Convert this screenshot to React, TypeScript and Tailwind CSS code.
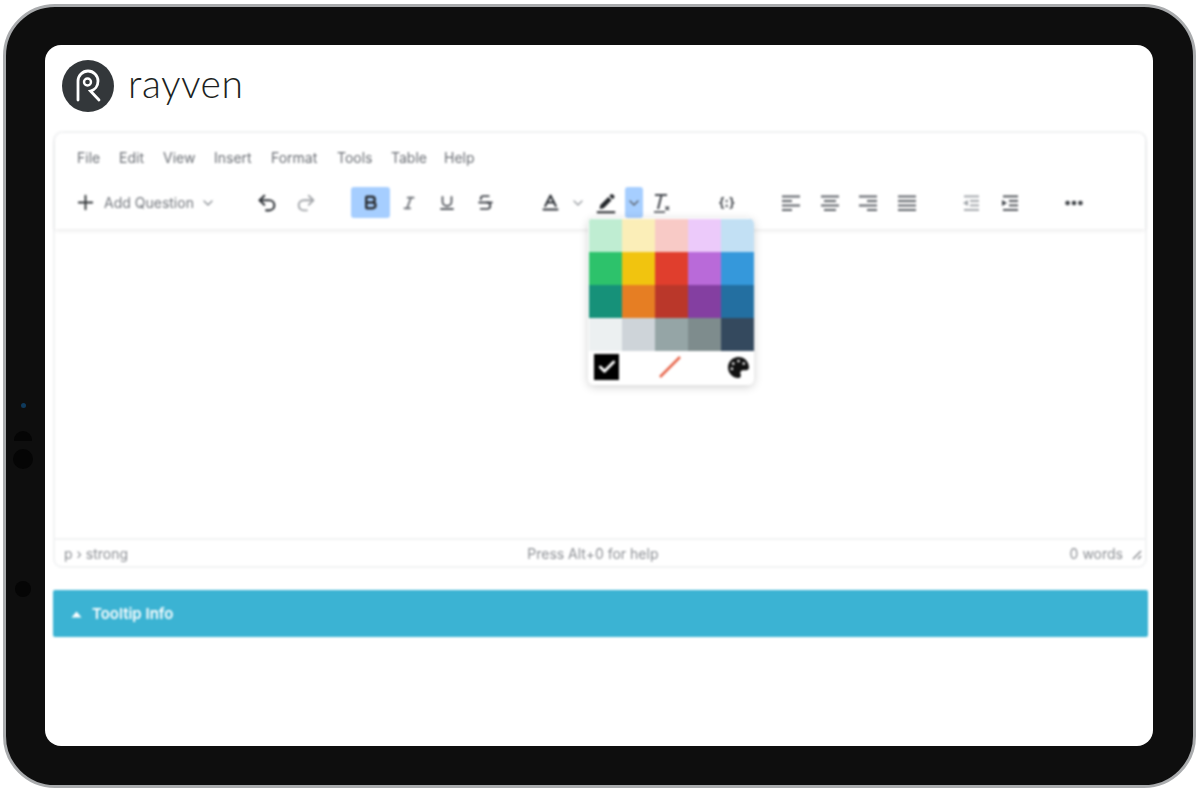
import { ReactNode } from "react";
import {
  Baseline,
  Bold,
  Check,
  ChevronDown,
  Italic,
  MoreHorizontal,
  Plus,
  Redo2,
  Strikethrough,
  Underline,
  Undo2,
} from "lucide-react";
import { FaPalette } from "react-icons/fa";

const menuItems = [
  { label: "File", cls: "w-[42px]" },
  { label: "Edit", cls: "w-[44px]" },
  { label: "View", cls: "w-[51px]" },
  { label: "Insert", cls: "w-[57px]" },
  { label: "Format", cls: "w-[66px]" },
  { label: "Tools", cls: "w-[54px]" },
  { label: "Table", cls: "w-[53px]" },
  { label: "Help", cls: "w-[40px]" },
];

const swatches = [
  "bg-[#bfedd2]", "bg-[#fbeeb8]", "bg-[#f8cac6]", "bg-[#eccafa]", "bg-[#c2e0f4]",
  "bg-[#2dc26b]", "bg-[#f1c40f]", "bg-[#e03e2d]", "bg-[#b96ad9]", "bg-[#3598db]",
  "bg-[#169179]", "bg-[#e67e23]", "bg-[#ba372a]", "bg-[#843fa1]", "bg-[#236fa1]",
  "bg-[#ecf0f1]", "bg-[#ced4d9]", "bg-[#95a5a6]", "bg-[#7e8c8d]", "bg-[#34495e]",
];

function Btn({ children, active }: { children: ReactNode; active?: boolean }) {
  return (
    <div
      className={`w-[38.5px] h-[31px] flex items-center justify-center rounded-[3px] text-[#2c3036] ${
        active ? "bg-[#a6ceff]" : ""
      }`}
    >
      {children}
    </div>
  );
}

function Lines({ rows }: { rows: [number, number][] }) {
  return (
    <svg width="18" height="16" viewBox="0 0 18 16" fill="#5f6369">
      {rows.map(([x, w], i) => (
        <rect key={i} x={x} y={0.5 + i * 4.5} width={w} height="2" />
      ))}
    </svg>
  );
}

function Indent({ dir }: { dir: "in" | "out" }) {
  const color = dir === "in" ? "#44484e" : "#9ca0a5";
  return (
    <svg width="18" height="16" viewBox="0 0 18 16" fill={color}>
      <rect x="2" y="0.500" width="15" height="1.800" />
      <rect x="8" y="5" width="9" height="1.800" />
      <rect x="8" y="9.500" width="9" height="1.800" />
      <rect x="2" y="14" width="15" height="1.800" />
      {dir === "in" ? <path d="M1 5 6 8l-5 3Z" /> : <path d="M6 5 1 8l5 3Z" />}
    </svg>
  );
}

function ClearFormat() {
  return (
    <svg width="20" height="22" viewBox="0 0 20 22" fill="none" stroke="#44484e">
      <path d="M3 3h12" strokeWidth="2" />
      <path d="M9.500 3 6 17" strokeWidth="2" />
      <path d="M2 20h11" strokeWidth="1.600" />
      <path d="m13.500 14.500 3.500 3.500m0-3.500-3.500 3.500" strokeWidth="1.500" />
    </svg>
  );
}

function Logo() {
  return (
    <div className="flex items-center gap-[14px]">
      <svg width="52" height="52" viewBox="0 0 52 52">
        <circle cx="26" cy="26" r="26" fill="#33373a" />
        <path
          d="M16 40V21a10 10 0 0 1 20 0c0 5-3 9-7.500 10l8.500 9"
          fill="none"
          stroke="#fff"
          strokeWidth="2.800"
          strokeLinecap="round"
        />
        <circle cx="25.500" cy="22" r="3.500" fill="none" stroke="#fff" strokeWidth="2.400" />
      </svg>
      <span className="font-['Lato',sans-serif] font-light text-[39px] leading-none tracking-[0.5px] text-[#1c1f22] pb-[5px]">
        rayven
      </span>
    </div>
  );
}

function ColorPopup() {
  return (
    <div className="absolute left-[-37px] top-[31px] z-10 w-[166px] h-[167px] bg-white rounded-[6px] shadow-[0_2px_10px_rgba(0,0,0,0.18)] overflow-hidden pt-px pl-px">
      <div className="grid grid-cols-[repeat(5,33px)] auto-rows-[33px]">
        {swatches.map((c) => (
          <div key={c} className={c} />
        ))}
      </div>
      <div className="flex items-center justify-between pl-[5px] pr-[5px] pt-[3px]">
        <div className="w-[25px] h-[26px] bg-black flex items-center justify-center">
          <Check size={20} color="#fff" strokeWidth={3.500} />
        </div>
        <svg width="24" height="24" viewBox="0 0 24 24" className="mr-[8px]">
          <line x1="2" y1="22" x2="22" y2="2" stroke="#e8664c" strokeWidth="2.500" />
        </svg>
        <FaPalette size={21} color="#111" />
      </div>
    </div>
  );
}

function Toolbar() {
  return (
    <div className="flex items-center h-[31px] mt-[6px] mb-[11px] ml-[11px]">
      <div className="w-[182px] flex items-center pl-[8px]">
        <Plus size={23} strokeWidth={2} color="#33373a" />
        <span className="ml-[7px] text-[14px] text-[#73777d]">Add Question</span>
        <ChevronDown size={16} className="ml-[6px] text-[#8d9197]" />
      </div>

      <div className="flex mr-[26px]">
        <Btn><Undo2 size={22} strokeWidth={2.300} color="#2f3338" /></Btn>
        <Btn><Redo2 size={22} color="#a2a5a9" /></Btn>
      </div>

      <div className="flex mr-[26px]">
        <Btn active><Bold size={17} strokeWidth={3.500} /></Btn>
        <Btn><Italic size={16} strokeWidth={2.500} color="#6a6e74" /></Btn>
        <Btn><Underline size={18} strokeWidth={2.400} color="#55595f" /></Btn>
        <Btn><Strikethrough size={19} strokeWidth={2.400} color="#44484e" /></Btn>
      </div>

      <div className="flex mr-[26px]">
        <Btn><Baseline size={21} strokeWidth={2.300} color="#2f3338" /></Btn>
        <div className="w-[17px] h-[31px] flex items-center justify-center">
          <ChevronDown size={16} color="#9a9da2" />
        </div>
        <Btn>
          <svg width="22" height="22" viewBox="0 0 24 24" fill="#24272b">
            <path d="M2 21h20v2.200H2z" />
            <path d="M5 18.500l.8-4.300 8.700-8.700 3.600 3.600-8.700 8.700Z" />
            <path d="M15.600 4.400l1.700-1.700a1.500 1.500 0 0 1 2.100 0l1.500 1.500a1.500 1.500 0 0 1 0 2.100l-1.700 1.700Z" />
          </svg>
        </Btn>
        <div className="relative w-[18px] h-[31px] bg-[#a6ceff] rounded-[3px] flex items-center justify-center">
          <ChevronDown size={16} color="#5a6068" />
          <ColorPopup />
        </div>
        <Btn><ClearFormat /></Btn>
      </div>

      <div className="flex mr-[26px]">
        <Btn>
          <span className="font-['Inter',sans-serif] font-bold text-[13px] text-[#44484e]">{"{:}"}</span>
        </Btn>
      </div>

      <div className="flex mr-[26px]">
        <Btn><Lines rows={[[0, 18], [0, 10], [0, 18], [0, 10]]} /></Btn>
        <Btn><Lines rows={[[0, 18], [3, 12], [0, 18], [3, 12]]} /></Btn>
        <Btn><Lines rows={[[0, 18], [8, 10], [0, 18], [8, 10]]} /></Btn>
        <Btn><Lines rows={[[0, 18], [0, 18], [0, 18], [0, 18]]} /></Btn>
      </div>

      <div className="flex mr-[26px]">
        <Btn><Indent dir="out" /></Btn>
        <Btn><Indent dir="in" /></Btn>
      </div>

      <Btn><MoreHorizontal size={22} strokeWidth={3} color="#2f3338" /></Btn>
    </div>
  );
}

function Editor() {
  return (
    <div className="h-[437px] ml-2 mr-[6px] border-2 border-[#f2f3f4] rounded-[9px] flex flex-col blur-[0.8px]">
      <div className="shadow-[0_2px_4px_rgba(0,0,0,0.08)] rounded-t-[9px]">
        <div className="h-[48px] flex items-center pl-[22px] text-[14px] text-[#6a6e74]">
          {menuItems.map((m) => (
            <span key={m.label} className={m.cls}>
              {m.label}
            </span>
          ))}
        </div>
        <Toolbar />
      </div>
      <div className="flex-1" />
      <div className="h-[28px] border-t-2 border-[#f2f3f4] flex items-center justify-between pl-[9px] pr-[3px] text-[14px] text-[#8c8f94]">
        <span>p › strong</span>
        <span className="mr-[12px]">Press Alt+0 for help</span>
        <div className="flex items-center gap-[9px]">
          <span>0 words</span>
          <svg width="10" height="10" viewBox="0 0 10 10" stroke="#7d8085" strokeWidth="1.300" className="mt-[4px]">
            <line x1="1" y1="9" x2="9" y2="1" />
            <line x1="6" y1="9" x2="9" y2="6" />
          </svg>
        </div>
      </div>
    </div>
  );
}

export default function App() {
  return (
    <div className="w-[1200px] h-[791px] bg-white pt-1 pl-[3px] overflow-hidden font-['Inter',sans-serif]">
      {/* Device frame */}
      <div className="relative w-[1193px] h-[784px] rounded-[52px] border-[3px] border-[#a9abad] bg-[#0e0e0e] px-[39px] pt-[38px]">
        {/* Camera dots on the bezel */}
        <div className="absolute left-[15px] top-[396px] w-[5px] h-[5px] rounded-full bg-[#0f3a5c]" />
        <div className="absolute left-[8px] top-[424px] w-[18px] h-[10px] rounded-t-full bg-[#050505]" />
        <div className="absolute left-[7px] top-[442px] w-[20px] h-[20px] rounded-full bg-[#050505]" />
        <div className="absolute left-[9px] top-[574px] w-[16px] h-[16px] rounded-full bg-[#050505]" />

        <div className="w-[1108px] h-[701px] bg-white rounded-[16px] pt-[15px] overflow-hidden">
          <div className="pl-[17px] mb-[19px]">
            <Logo />
          </div>
          <Editor />
          <div className="h-[47px] mt-[22px] ml-2 mr-[5px] bg-[#3bb3d3] rounded-[2px] flex items-center pl-[18px] pt-px text-white blur-[0.8px]">
            <svg width="11" height="7" viewBox="0 0 11 7" fill="#fff">
              <path d="M5.500 0.500 10.500 6.500H0.500Z" />
            </svg>
            <span className="ml-[10px] text-[15px] font-semibold">Tooltip Info</span>
          </div>
        </div>
      </div>
    </div>
  );
}
